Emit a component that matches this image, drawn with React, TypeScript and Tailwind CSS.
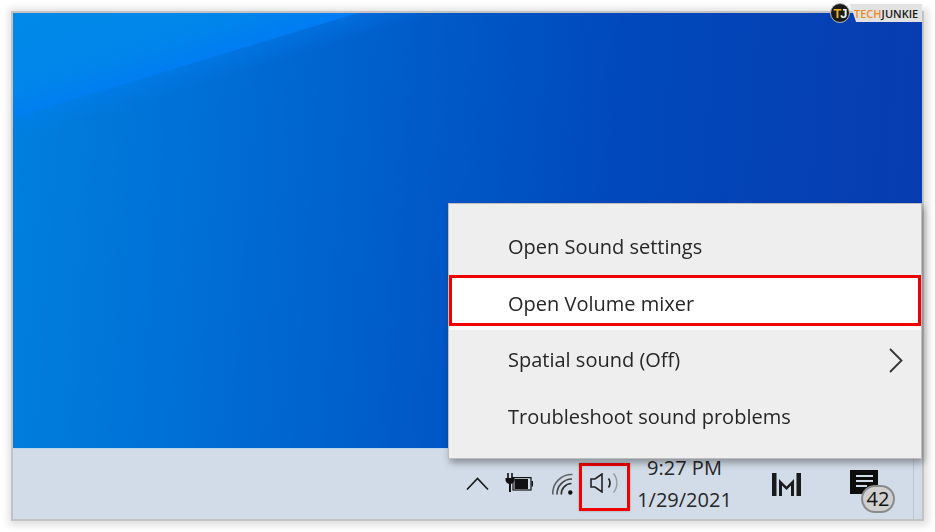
export default function App() {
  const font = { fontFamily: '"Open Sans", "Noto Sans", sans-serif' };
  return (
    <div className="w-[935px] h-[532px] bg-white pt-[11px] pl-[11px] overflow-hidden" style={font}>
      <div className="relative w-[913px] h-[510px] flex flex-col border-2 border-[#c3c3c3] shadow-[1px_1px_8px_3px_rgba(0,0,0,0.14)] blur-[0.3px]">
        <div className="relative flex-1 overflow-hidden bg-[linear-gradient(94deg,#0080de_0%,#0070d6_20%,#005ac8_45%,#0049bc_65%,#083cb0_100%)]">
          <svg className="absolute inset-0" width="909" height="435" viewBox="0 0 909 435">
            <defs>
              <linearGradient id="ray" gradientUnits="userSpaceOnUse" x1="120" y1="-100" x2="172" y2="52">
                <stop offset="0" stopColor="#008ce6" />
                <stop offset="0.8" stopColor="#0086ea" />
                <stop offset="1" stopColor="#007df2" />
              </linearGradient>
              <linearGradient id="glow" gradientUnits="userSpaceOnUse" x1="172" y1="52" x2="179" y2="75">
                <stop offset="0" stopColor="#0080f4" stopOpacity="0.4" />
                <stop offset="1" stopColor="#0080f4" stopOpacity="0" />
              </linearGradient>
            </defs>
            <polygon points="0,105 345,0 430,0 0,180" fill="url(#glow)" />
            <polygon points="0,0 345,0 0,105" fill="url(#ray)" />
          </svg>
        </div>
        <div className="h-[71px] bg-[#d2dce8] border-t border-[#bcd6ee] flex items-start text-[#262626]">
          <svg className="ml-[453px] mt-[28px]" width="23" height="14" viewBox="0 0 23 14" fill="none" stroke="#1a1a1a" strokeWidth="1.7">
            <path d="M1 12.5 L11.5 1.5 L22 12.5" />
          </svg>
          <svg className="ml-[16px] mt-[24px]" width="28" height="19" viewBox="0 0 28 19" fill="none">
            <path d="M3 0v5M7 0v5" stroke="#111" strokeWidth="1.6" />
            <path d="M0.5 5h9v2a4.5 4 0 0 1-9 0z" fill="#111" />
            <path d="M5 10v9" stroke="#111" strokeWidth="2" />
            <rect x="8" y="4.6" width="18" height="12.4" stroke="#111" strokeWidth="1.2" />
            <rect x="9.5" y="6" width="13.5" height="10" fill="#111" />
            <rect x="26.5" y="8" width="1.5" height="5.5" fill="#111" />
          </svg>
          <svg className="ml-[19px] mt-[24px]" width="21" height="22" viewBox="0 0 21 22" fill="none" strokeWidth="1.7">
            <path d="M0.8 21.5A19 19 0 0 1 20.5 1.5" stroke="#666" />
            <path d="M5 21.5A15 15 0 0 1 20 6" stroke="#484848" />
            <path d="M9.3 21.5A10.5 10.5 0 0 1 19.5 10.5" stroke="#333" />
            <circle cx="18.3" cy="19.5" r="2.2" fill="#111" />
          </svg>
          <div className="ml-[6px] mt-[14px] w-[51px] h-[48px] border-[3px] border-[#f00000] pl-[8px] pt-[7px] shadow-[0_0_2px_rgba(0,0,0,0.3)]">
            <svg width="28" height="20" viewBox="0 0 28 20" fill="none">
              <path d="M1 6h4l7-5v18l-7-5H1z" stroke="#222" strokeWidth="1.6" />
              <path d="M18.5 5.5c2 2.5 2 6.5 0 9" stroke="#222" strokeWidth="1.7" />
              <path d="M23.5 0.5c4.5 5.5 4.5 13.5 0 19" stroke="#999" strokeWidth="1.4" />
            </svg>
          </div>
          <div className="ml-[8px] mt-[3px] w-[93px] flex flex-col items-center text-[20px] leading-[32px]">
            <span className="whitespace-nowrap">9:27 PM</span>
            <span className="whitespace-nowrap">1/29/2021</span>
          </div>
          <svg className="ml-[41px] mt-[24px]" width="29" height="23" viewBox="0 0 29 23" fill="#1a1a1a">
            <rect x="0" y="0" width="4.5" height="23" />
            <rect x="24.5" y="0" width="4.5" height="23" />
            <path d="M7 6L14.5 13.5 22 6V23H19V12.5L14.5 17 10 12.5V23H7z" />
          </svg>
          <div className="relative ml-[49px] mt-[21px] w-[28px] h-[24px]">
            <div className="absolute left-0 top-0 w-[28px] h-[24px] bg-[#0d0d0d] flex flex-col gap-[3px] pt-[5px] pl-[6px]">
              <div className="w-[17px] h-[2px] bg-[#d2dce8]" />
              <div className="w-[17px] h-[2px] bg-[#d2dce8]" />
              <div className="w-[11px] h-[2px] bg-[#d2dce8]" />
            </div>
            <div className="absolute left-[11px] top-[15px] w-[34px] h-[28px] rounded-full bg-[#d0d0d0] border-2 border-[#8a8a8a] flex items-center justify-center text-[20px] leading-none text-[#111]">
              42
            </div>
          </div>
          <div className="ml-[35px] self-stretch w-[1px] bg-[#bcc6d4]" />
        </div>

        <div className="absolute left-[435px] top-[190px] w-[474px] h-[256px] bg-[#eeeeee] border border-[#bdbdbd] shadow-[2px_4px_7px_rgba(0,0,0,0.35)] text-[20px] text-[#262626] flex flex-col">
          <div className="h-[71px] pt-[25px] pl-[59px] leading-[36px]">Open Sound settings</div>
          <div className="h-[51px] bg-white border-[3px] border-[#f00000] pl-[56px] pt-[6px] flex items-center">Open Volume mixer</div>
          <div className="h-[4px] bg-[#fafafa]" />
          <div className="h-[60px] pl-[59px] flex items-center justify-between pr-[18px]">
            <span>Spatial sound (Off)</span>
            <svg width="14" height="25" viewBox="0 0 14 25" fill="none" stroke="#333" strokeWidth="1.8">
              <path d="M1 1l11.5 11.5L1 24" />
            </svg>
          </div>
          <div className="h-[54px] pl-[59px] flex items-center">Troubleshoot sound problems</div>
        </div>

        <div className="absolute right-0 top-[-10px] h-[20px] flex items-center">
          <div className="w-[20px] h-[20px] rounded-full bg-[#1b1b1b] border border-[#bbbbbb] text-[13px] font-bold flex items-center justify-center leading-none tracking-[-1px]" style={{ fontFamily: '"Liberation Sans", sans-serif' }}>
            <span className="text-[#f5b21a]">T</span>
            <span className="text-[#f2f2f2]">J</span>
          </div>
          <div className="w-[72px] h-[18px] bg-[#e2e2e2] [clip-path:polygon(0_0,100%_0,100%_100%,6px_100%)] text-[11px] font-semibold flex items-center pl-[4px] leading-none" style={{ fontFamily: '"Open Sans", sans-serif' }}>
            <span className="text-[#f08a1d]">TECH</span>
            <span className="text-[#1a1a1a]">JUNKIE</span>
          </div>
        </div>
      </div>
    </div>
  );
}
